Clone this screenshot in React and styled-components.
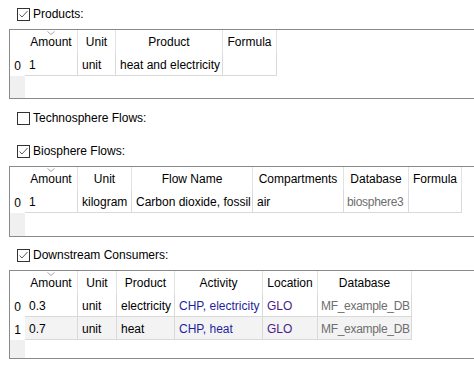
import React from 'react'
import styled, { createGlobalStyle } from 'styled-components'

const GlobalStyle = createGlobalStyle`
  body {
    margin: 0;
    background: #ffffff;
    font-family: "Liberation Sans", Arial, sans-serif;
    font-size: 12px;
    color: #000000;
    overflow: hidden;
  }
`

const Page = styled.div`
  display: flex;
  flex-direction: column;
  padding-left: 9px;
`

const CheckRow = styled.div`
  display: flex;
  align-items: center;
  height: 21px;
  margin-top: ${({ $top }) => $top}px;
  padding-left: 8px;
`

const CheckLabel = styled.span`
  margin-left: 3px;
  line-height: 21px;
`

const Frame = styled.div`
  display: flex;
  flex-direction: column;
  margin-top: 4px;
  margin-right: -10px;
  height: ${({ $h }) => $h}px;
  box-sizing: border-box;
  border: 1px solid #8a8a8a;
  background: #ffffff;
`

const Row = styled.div`
  display: flex;
  height: 23px;
  flex-shrink: 0;
`

const Corner = styled.div`
  width: 15px;
  flex-shrink: 0;
`

const RowHead = styled.div`
  width: 15px;
  flex-shrink: 0;
  display: flex;
  align-items: center;
  justify-content: center;
  padding-top: 2px;
  box-sizing: border-box;
`

const HeadCell = styled.div`
  position: relative;
  width: ${({ $w }) => $w}px;
  flex-shrink: 0;
  box-sizing: border-box;
  border-right: 1px solid #e3e3e3;
  display: flex;
  align-items: center;
  justify-content: center;
  padding-top: 1px;
  white-space: nowrap;
`

const SortMark = styled.svg`
  position: absolute;
  top: 1px;
  left: 50%;
  margin-left: -4px;
`

const toneColor = {
  plain: '#000000',
  db: '#6e6e6e',
  act: '#1f1f9c',
  loc: '#4a1c8a',
}

const DataCell = styled.div`
  width: ${({ $w }) => $w}px;
  flex-shrink: 0;
  box-sizing: border-box;
  border-right: 1px solid #d9d9d9;
  border-bottom: 1px solid #d9d9d9;
  background: ${({ $alt }) => ($alt ? '#f3f3f3' : '#ffffff')};
  color: ${({ $tone }) => toneColor[$tone || 'plain']};
  letter-spacing: ${({ $tone }) => ($tone === 'db' ? '-0.3px' : '0')};
  display: flex;
  align-items: center;
  padding-left: ${({ $tone }) => ($tone === 'db' ? 3 : 4)}px;
  padding-top: 1px;
  white-space: nowrap;
  overflow: hidden;
`

const Filler = styled.div`
  flex: 1;
  display: flex;
`

const FillerHead = styled.div`
  width: 15px;
  background: #f0f0f0;
`

function CheckBox({ checked }) {
  return (
    <svg width="13" height="13" viewBox="0 0 13 13">
      <rect x="0.5" y="0.5" width="12" height="12" fill="#ffffff" stroke="#333333" />
      {checked && (
        <polyline points="2.5,6.5 5,9 10.5,3" fill="none" stroke="#5c5c5c" strokeWidth="1" />
      )}
    </svg>
  )
}

function Table({ cols, rows, height }) {
  return (
    <Frame $h={height}>
      <Row>
        <Corner />
        {cols.map((c, i) => (
          <HeadCell key={c.name} $w={c.w}>
            {i === 0 && (
              <SortMark width="8" height="4" viewBox="0 0 8 4">
                <polyline points="0.5,0.5 4,3.5 7.5,0.5" fill="none" stroke="#a6a6a6" strokeWidth="1" />
              </SortMark>
            )}
            {c.name}
          </HeadCell>
        ))}
      </Row>
      {rows.map((r, ri) => (
        <Row key={ri}>
          <RowHead>{ri}</RowHead>
          {r.map((cell, ci) => (
            <DataCell key={ci} $w={cols[ci].w} $tone={cols[ci].tone} $alt={ri % 2 === 1}>
              {cell}
            </DataCell>
          ))}
        </Row>
      ))}
      <Filler>
        <FillerHead />
      </Filler>
    </Frame>
  )
}

const products = {
  cols: [
    { name: 'Amount', w: 53 },
    { name: 'Unit', w: 38 },
    { name: 'Product', w: 107 },
    { name: 'Formula', w: 54 },
  ],
  rows: [['1', 'unit', 'heat and electricity', '']],
}

const biosphere = {
  cols: [
    { name: 'Amount', w: 53 },
    { name: 'Unit', w: 54 },
    { name: 'Flow Name', w: 121 },
    { name: 'Compartments', w: 91 },
    { name: 'Database', w: 65, tone: 'db' },
    { name: 'Formula', w: 53 },
  ],
  rows: [['1', 'kilogram', 'Carbon dioxide, fossil', 'air', 'biosphere3', '']],
}

const consumers = {
  cols: [
    { name: 'Amount', w: 53 },
    { name: 'Unit', w: 39 },
    { name: 'Product', w: 58 },
    { name: 'Activity', w: 88, tone: 'act' },
    { name: 'Location', w: 55, tone: 'loc' },
    { name: 'Database', w: 94, tone: 'db' },
  ],
  rows: [
    ['0.3', 'unit', 'electricity', 'CHP, electricity', 'GLO', 'MF_example_DB'],
    ['0.7', 'unit', 'heat', 'CHP, heat', 'GLO', 'MF_example_DB'],
  ],
}

export default function App() {
  return (
    <>
      <GlobalStyle />
      <Page>
        <CheckRow $top={4}>
          <CheckBox checked />
          <CheckLabel>Products:</CheckLabel>
        </CheckRow>
        <Table {...products} height={70} />

        <CheckRow $top={9}>
          <CheckBox />
          <CheckLabel>Technosphere Flows:</CheckLabel>
        </CheckRow>

        <CheckRow $top={12}>
          <CheckBox checked />
          <CheckLabel>Biosphere Flows:</CheckLabel>
        </CheckRow>
        <Table {...biosphere} height={71} />

        <CheckRow $top={8}>
          <CheckBox checked />
          <CheckLabel>Downstream Consumers:</CheckLabel>
        </CheckRow>
        <Table {...consumers} height={89} />
      </Page>
    </>
  )
}
